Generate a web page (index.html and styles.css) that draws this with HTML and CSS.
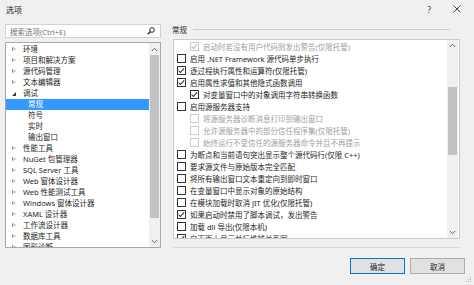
FILE: index.html
```html
<!DOCTYPE html>
<html>
	<head>
		<meta charset="UTF-8">
		<title>选项</title>
		<link rel="stylesheet" href="styles.css">
	</head>
	<body>
		<div class="dialog">
			<div class="titlebar">
				<span class="title">选项</span>
				<span class="help">?</span>
				<svg class="close" width="8" height="8" viewBox="0 0 8 8"><path d="M0.5 0.5L7.5 7.5M7.5 0.5L0.5 7.5" stroke="#333" stroke-width="0.9" fill="none"/></svg>
			</div>
			<div class="content">
				<div class="left">
					<div class="search">
						<span class="ph">搜索选项(Ctrl+E)</span>
						<svg width="8" height="8" viewBox="0 0 8 8"><circle cx="5" cy="3" r="2.3" stroke="#222" stroke-width="1" fill="none"/><path d="M3.3 4.7L0.8 7.2" stroke="#222" stroke-width="1.3"/></svg>
					</div>
					<div class="tree">
						<ul class="nodes">
							<li><i class="arr"></i>环境</li>
							<li><i class="arr"></i>项目和解决方案</li>
							<li><i class="arr"></i>源代码管理</li>
							<li><i class="arr"></i>文本编辑器</li>
							<li><i class="arr open"></i>调试</li>
							<li class="child sel">常规</li>
							<li class="child">符号</li>
							<li class="child">实时</li>
							<li class="child">输出窗口</li>
							<li><i class="arr"></i>性能工具</li>
							<li><i class="arr"></i>NuGet 包管理器</li>
							<li><i class="arr"></i>SQL Server 工具</li>
							<li><i class="arr"></i>Web 窗体设计器</li>
							<li><i class="arr"></i>Web 性能测试工具</li>
							<li><i class="arr"></i>Windows 窗体设计器</li>
							<li><i class="arr"></i>XAML 设计器</li>
							<li><i class="arr"></i>工作流设计器</li>
							<li><i class="arr"></i>数据库工具</li>
							<li><i class="arr"></i>图形诊断</li>
						</ul>
						<div class="vscroll tree-scroll">
							<div class="sbtn"><svg width="7" height="5" viewBox="0 0 7 5"><path d="M0.8 4L3.5 1.3L6.2 4" stroke="#606060" fill="none"/></svg></div>
							<div class="track"><div class="thumb"></div></div>
							<div class="sbtn"><svg width="7" height="5" viewBox="0 0 7 5"><path d="M0.8 1L3.5 3.7L6.2 1" stroke="#606060" fill="none"/></svg></div>
						</div>
					</div>
				</div>
				<div class="right">
					<div class="heading"><span>常规</span><span class="rule"></span></div>
					<div class="options">
						<ul class="opts">
							<li class="sub off"><i class="cb on"></i>启动时若没有用户代码则发出警告(仅限托管)</li>
							<li><i class="cb"></i>启用 .NET Framework 源代码单步执行</li>
							<li><i class="cb on"></i>逐过程执行属性和运算符(仅限托管)</li>
							<li><i class="cb on"></i>启用属性求值和其他隐式函数调用</li>
							<li class="sub"><i class="cb on"></i>对变量窗口中的对象调用字符串转换函数</li>
							<li><i class="cb"></i>启用源服务器支持</li>
							<li class="sub off"><i class="cb"></i>将源服务器诊断消息打印到输出窗口</li>
							<li class="sub off"><i class="cb"></i>允许源服务器中的部分信任程序集(仅限托管)</li>
							<li class="sub off"><i class="cb"></i>始终运行不受信任的源服务器命令并且不再提示</li>
							<li><i class="cb"></i>为断点和当前语句突出显示整个源代码行(仅限 C++)</li>
							<li><i class="cb"></i>要求源文件与原始版本完全匹配</li>
							<li><i class="cb"></i>将所有输出窗口文本重定向到即时窗口</li>
							<li><i class="cb"></i>在变量窗口中显示对象的原始结构</li>
							<li><i class="cb"></i>在模块加载时取消 JIT 优化(仅限托管)</li>
							<li><i class="cb on"></i>如果启动时禁用了脚本调试，发出警告</li>
							<li><i class="cb"></i>加载 dll 导出(仅限本机)</li>
							<li><i class="cb on"></i>自下而上显示并行堆栈关系图</li>
						</ul>
						<div class="vscroll opt-scroll">
							<div class="sbtn"><svg width="7" height="5" viewBox="0 0 7 5"><path d="M0.8 4L3.5 1.3L6.2 4" stroke="#606060" fill="none"/></svg></div>
							<div class="track"><div class="thumb"></div></div>
							<div class="sbtn"><svg width="7" height="5" viewBox="0 0 7 5"><path d="M0.8 1L3.5 3.7L6.2 1" stroke="#606060" fill="none"/></svg></div>
						</div>
					</div>
					<div class="sep"></div>
				</div>
			</div>
			<div class="footer">
				<button class="btn default">确定</button>
				<button class="btn">取消</button>
			</div>
			<svg class="grip" width="6" height="6" viewBox="0 0 6 6"><rect x="4" y="0" width="1" height="1" fill="#b0b0b0"/><rect x="2" y="2" width="1" height="1" fill="#b0b0b0"/><rect x="4" y="2" width="1" height="1" fill="#b0b0b0"/><rect x="0" y="4" width="1" height="1" fill="#b0b0b0"/><rect x="2" y="4" width="1" height="1" fill="#b0b0b0"/><rect x="4" y="4" width="1" height="1" fill="#b0b0b0"/></svg>
		</div>
	</body>
</html>
```

FILE: styles.css
```css
html,body{
	margin: 0;
	padding: 0;
}
body{
	background: #f0f0f0;
	font-family: "Noto Sans", "Noto Sans CJK SC", sans-serif;
	font-size: 7.5px;
	color: #1e1e1e;
}
ul{
	list-style: none;
	margin: 0;
	padding: 0;
}
.dialog{
	position: relative;
	width: 474px;
	height: 285px;
	display: flex;
	flex-direction: column;
	overflow: hidden;
}
.titlebar{
	height: 20px;
	display: flex;
	align-items: center;
	padding: 0 13px 0 6px;
}
.title{
	flex: 1;
	font-size: 8px;
	margin-top: -1px;
}
.help{
	font-size: 8px;
	color: #333;
	margin-right: 22px;
	margin-top: -2px;
}
.close{
	margin-top: -2px;
}
.content{
	display: flex;
	height: 228px;
	padding-left: 5px;
	gap: 12px;
}
.left{
	width: 156px;
	display: flex;
	flex-direction: column;
}
.search{
	margin-top: 4px;
	height: 14px;
	box-sizing: border-box;
	border: 1px solid #d3d3d3;
	background: #fff;
	display: flex;
	align-items: center;
	padding: 0 5px 0 4px;
}
.search .ph{
	flex: 1;
	color: #707070;
}
.tree{
	margin-top: 4px;
	flex: 1;
	box-sizing: border-box;
	border: 1px solid #a9a9a9;
	background: #fff;
	display: flex;
	overflow: hidden;
}
.nodes{
	flex: 1;
	padding-top: 1px;
}
.nodes li{
	height: 11px;
	line-height: 11px;
	display: flex;
	align-items: center;
	padding-left: 4px;
	white-space: nowrap;
}
.nodes li.child{
	padding-left: 22px;
}
.nodes li.sel{
	background: #3399ff;
	color: #fff;
}
.arr{
	width: 8px;
	height: 11px;
	margin-right: 5px;
	position: relative;
}
.arr::before{
	content: "";
	position: absolute;
	left: 2px;
	top: 3px;
	border-style: solid;
	border-width: 2.5px 0 2.5px 4px;
	border-color: transparent transparent transparent #8a8a8a;
}
.arr::after{
	content: "";
	position: absolute;
	left: 3px;
	top: 4.2px;
	border-style: solid;
	border-width: 1.3px 0 1.3px 2px;
	border-color: transparent transparent transparent #fff;
}
.arr.open::before{
	left: 2px;
	top: 4px;
	border-width: 0 0 4px 4px;
	border-color: transparent transparent #3a3a3a transparent;
}
.arr.open::after{
	display: none;
}
.vscroll{
	width: 11px;
	display: flex;
	flex-direction: column;
	background: #f0f0f0;
}
.sbtn{
	height: 12px;
	display: flex;
	align-items: center;
	justify-content: center;
}
.track{
	flex: 1;
}
.thumb{
	background: #c2c2c2;
	margin: 0 1px;
}
.tree-scroll .thumb{
	height: 163px;
}
.opt-scroll{
	margin-right: 1px;
}
.opt-scroll .sbtn{
	height: 11px;
}
.opt-scroll .track{
	padding-top: 36px;
}
.opt-scroll .thumb{
	height: 68px;
}
.right{
	width: 287px;
	display: flex;
	flex-direction: column;
}
.heading{
	height: 19px;
	display: flex;
	align-items: center;
	gap: 6px;
	margin-left: -1px;
}
.heading span:first-child{
	margin-top: -1px;
}
.rule{
	flex: 1;
	height: 1px;
	background: #cfcfcf;
	margin-right: 10px;
}
.options{
	height: 200px;
	box-sizing: border-box;
	border: 1px solid #cacaca;
	background: #fff;
	display: flex;
	overflow: hidden;
}
.opts{
	flex: 1;
	padding-top: 0;
}
.opts li{
	height: 12px;
	display: flex;
	align-items: center;
	padding-left: 3px;
	white-space: nowrap;
}
.opts li.sub{
	padding-left: 16px;
}
.opts li.off{
	color: #a0a0a0;
}
.cb{
	width: 9px;
	height: 9px;
	box-sizing: border-box;
	border: 1px solid #333;
	background: #fff;
	margin-right: 4px;
	position: relative;
	flex: none;
}
.off .cb{
	border-color: #cccccc;
}
.cb.on::after{
	content: "";
	position: absolute;
	left: 2.3px;
	top: 0.3px;
	width: 2.2px;
	height: 4.6px;
	border: solid #222;
	border-width: 0 1px 1px 0;
	transform: rotate(42deg);
}
.off .cb.on::after{
	border-color: #b0b0b0;
}
.sep{
	margin-top: 8px;
	height: 1px;
	background: #d8d8d8;
}
.footer{
	display: flex;
	justify-content: flex-end;
	gap: 5px;
	padding: 10px 9px 0 0;
}
.btn{
	width: 55px;
	height: 16px;
	box-sizing: border-box;
	border: 1px solid #adadad;
	background: #e1e1e1;
	font-family: "Noto Sans", "Noto Sans CJK SC", sans-serif;
	font-size: 7.5px;
	color: #1e1e1e;
	padding: 0;
}
.btn.default{
	border-color: #0078d7;
}
.grip{
	position: absolute;
	right: 2px;
	bottom: 2px;
}
```
